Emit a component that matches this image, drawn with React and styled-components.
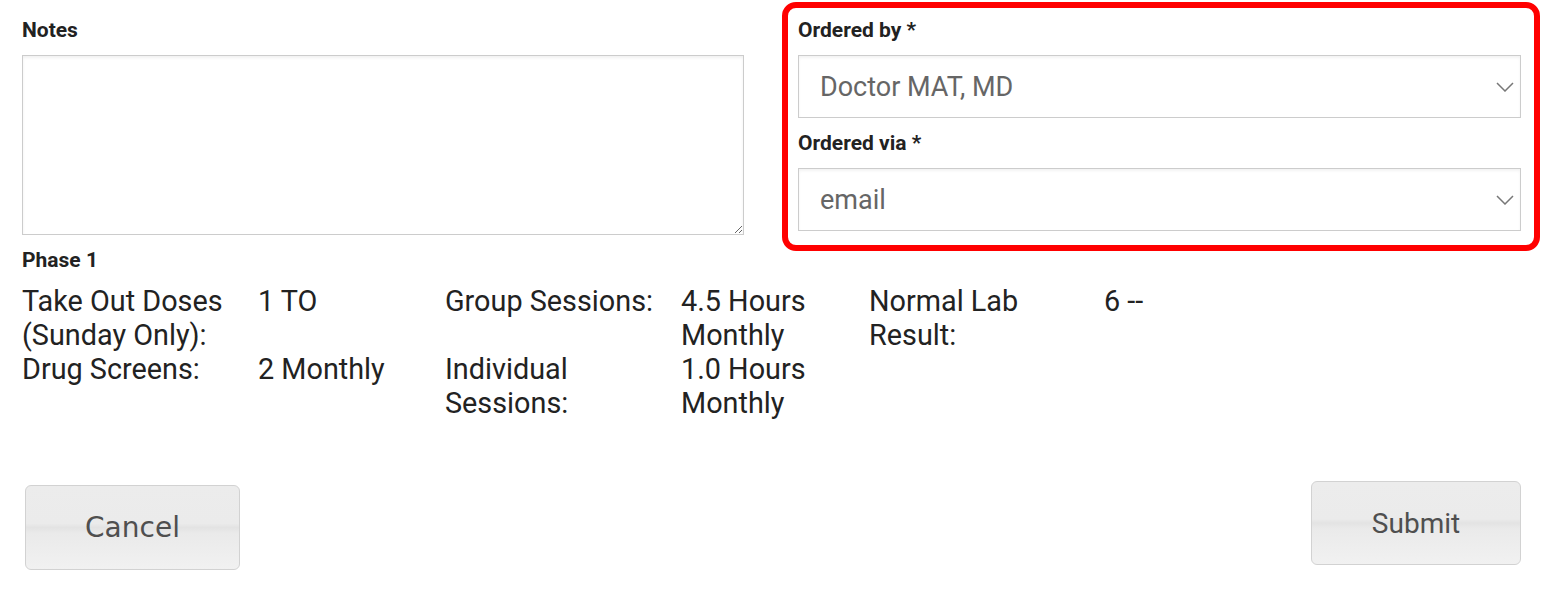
import React from "react";
import styled, { createGlobalStyle } from "styled-components";

const GlobalStyle = createGlobalStyle`
  body {
    margin: 0;
    background: #fff;
    font-family: Roboto, "Liberation Sans", Arial, sans-serif;
    color: #222;
  }
`;

const Page = styled.div`
  width: 1542px;
  box-sizing: border-box;
  padding: 18px 21px 0 22px;
`;

const TopRow = styled.div`
  display: grid;
  grid-template-columns: 722px 723px;
  column-gap: 54px;
  align-items: start;
`;

const Column = styled.div`
  display: flex;
  flex-direction: column;
`;

// red highlight drawn round the ordering fields
const Highlight = styled.div`
  display: flex;
  flex-direction: column;
  margin: -16px -19px -20px -16px;
  padding: 10px 13px 14px 10px;
  border: 6px solid #ff0000;
  border-radius: 14px;
`;

const FieldLabel = styled.label`
  display: block;
  font-size: 21px;
  line-height: 24px;
  font-weight: bold;
  color: #222;
  margin-bottom: 13px;
  & + * + & {
    margin-top: 13px;
    margin-bottom: 13px;
  }
`;

const NotesArea = styled.textarea`
  display: block;
  width: 722px;
  height: 180px;
  box-sizing: border-box;
  margin: 0;
  border: 1px solid #cccccc;
  border-radius: 0;
  box-shadow: inset 0 2px 3px rgba(0, 0, 0, 0.06);
  font-family: inherit;
  font-size: 20px;
  resize: both;
`;

const FakeSelect = styled.div`
  display: flex;
  align-items: center;
  justify-content: space-between;
  height: 63px;
  box-sizing: border-box;
  padding: 0 6px 0 21px;
  border: 1px solid #cccccc;
  box-shadow: inset 0 2px 3px rgba(0, 0, 0, 0.05);
  font-size: 27px;
  color: #666;
  background: #fff;
`;

const Chevron = () => (
  <svg width="18" height="10" viewBox="0 0 18 10" fill="none">
    <polyline points="1,1 9,9 17,1" stroke="#777" strokeWidth="1.5" />
  </svg>
);

const Select = ({ value }) => (
  <FakeSelect>
    <span>{value}</span>
    <Chevron />
  </FakeSelect>
);

const PhaseTitle = styled.h4`
  margin: 13px 0 12px;
  font-size: 21px;
  line-height: 24px;
  font-weight: bold;
  color: #222;
`;

const PhaseGrid = styled.div`
  display: grid;
  grid-template-columns: 236px 187px 236px 188px 235px 1fr;
  font-size: 28.8px;
  line-height: 34px;
  color: #222;
`;

const Cell = styled.div`
  padding-right: 6px;
`;

const ButtonRow = styled.div`
  display: flex;
  justify-content: space-between;
  align-items: flex-start;
  margin-top: 61px;
`;

const Button = styled.button`
  width: ${(p) => p.$w}px;
  height: ${(p) => p.$h}px;
  margin: ${(p) => p.$offset || "0"};
  border: 1px solid #d2d2d2;
  border-radius: 6px;
  background: linear-gradient(
    to bottom,
    #ececec 0%,
    #ebebeb 45%,
    #e3e3e3 50%,
    #eaeaea 57%,
    #f1f1f1 100%
  );
  color: #4f4f4f;
  font-family: ${(p) => p.$font};
  font-size: ${(p) => p.$size}px;
  cursor: pointer;
`;

const phaseRows = [
  [
    "Take Out Doses (Sunday Only):",
    "1 TO",
    "Group Sessions:",
    "4.5 Hours Monthly",
    "Normal Lab Result:",
    "6 --",
  ],
  ["Drug Screens:", "2 Monthly", "Individual Sessions:", "1.0 Hours Monthly", "", ""],
];

export default function App() {
  return (
    <Page>
      <GlobalStyle />
      <TopRow>
        <Column>
          <FieldLabel htmlFor="notes">Notes</FieldLabel>
          <NotesArea id="notes" />
        </Column>
        <Highlight>
          <FieldLabel>Ordered by *</FieldLabel>
          <Select value="Doctor MAT, MD" />
          <FieldLabel>Ordered via *</FieldLabel>
          <Select value="email" />
        </Highlight>
      </TopRow>

      <PhaseTitle>Phase 1</PhaseTitle>
      <PhaseGrid>
        {phaseRows.map((row, i) =>
          row.map((text, j) => <Cell key={`${i}-${j}`}>{text}</Cell>)
        )}
      </PhaseGrid>

      <ButtonRow>
        <Button
          $w={215}
          $h={85}
          $offset="4px 0 0 3px"
          $font={'"DejaVu Sans", Verdana, sans-serif'}
          $size={28}
        >
          Cancel
        </Button>
        <Button
          $w={210}
          $h={84}
          $font={'Roboto, "Liberation Sans", sans-serif'}
          $size={28}
        >
          Submit
        </Button>
      </ButtonRow>
    </Page>
  );
}
